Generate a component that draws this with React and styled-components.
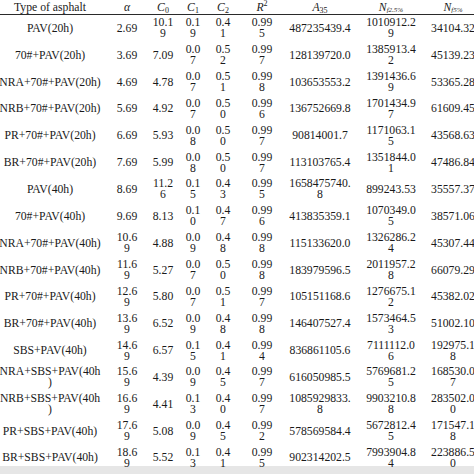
import React from 'react';
import styled, { createGlobalStyle } from 'styled-components';

const GlobalStyle = createGlobalStyle`
  html, body {
    margin: 0;
    padding: 0;
    background: #fff;
  }
`

const Page = styled.div`
  width: 474px;
  height: 474px;
  overflow: hidden;
  background: linear-gradient(to bottom, #fff 466px, #e6e6e6 466px);
  font-family: "Liberation Serif", "Times New Roman", serif;
  font-size: 11.7px;
  color: #1a1a1a;
`

const Table = styled.div`
  display: grid;
  grid-template-columns: 110px 44px 28px 32px 28px 50px 66px 76px 48px;
  grid-template-rows: 15px;
  grid-auto-rows: 26.85px;
  margin-left: -5px;
  width: 482px;
`

const HeadCell = styled.div`
  display: flex;
  align-items: center;
  justify-content: center;
  white-space: nowrap;
  border-bottom: 1px solid #2a2a2a;
  line-height: 11px;
`

const Cell = styled.div`
  display: flex;
  align-items: center;
  justify-content: center;
  text-align: center;
  white-space: pre;
  line-height: 11px;
`

const Sym = styled.i`
  font-style: italic;
`

const Sub = styled.span`
  font-size: ${props => props.small ? '7px' : '8px'};
  font-style: ${props => props.italic ? 'italic' : 'normal'};
  position: relative;
  top: 3px;
`

const Sup = styled.span`
  font-size: 8px;
  position: relative;
  top: -4px;
`

const rows = [
  ['PAV(20h)', '2.69', '10.1\n9', '0.1\n9', '0.4\n1', '0.99\n5', '487235439.4', '1010912.2\n9', '34104.32'],
  ['70#+PAV(20h)', '3.69', '7.09', '0.0\n7', '0.5\n2', '0.99\n7', '128139720.0', '1385913.4\n2', '45139.23'],
  ['NRA+70#+PAV(20h)', '4.69', '4.78', '0.0\n7', '0.5\n1', '0.99\n8', '103653553.2', '1391436.6\n9', '53365.28'],
  ['NRB+70#+PAV(20h)', '5.69', '4.92', '0.0\n7', '0.5\n0', '0.99\n6', '136752669.8', '1701434.9\n7', '61609.45'],
  ['PR+70#+PAV(20h)', '6.69', '5.93', '0.0\n8', '0.5\n0', '0.99\n7', '90814001.7', '1171063.1\n5', '43568.63'],
  ['BR+70#+PAV(20h)', '7.69', '5.99', '0.0\n8', '0.5\n0', '0.99\n7', '113103765.4', '1351844.0\n1', '47486.84'],
  ['PAV(40h)', '8.69', '11.2\n6', '0.1\n5', '0.4\n3', '0.99\n5', '1658475740.\n8', '899243.53', '35557.37'],
  ['70#+PAV(40h)', '9.69', '8.13', '0.1\n0', '0.4\n7', '0.99\n6', '413835359.1', '1070349.0\n5', '38571.06'],
  ['NRA+70#+PAV(40h)', '10.6\n9', '4.88', '0.0\n9', '0.4\n8', '0.99\n8', '115133620.0', '1326286.2\n4', '45307.44'],
  ['NRB+70#+PAV(40h)', '11.6\n9', '5.27', '0.0\n7', '0.5\n0', '0.99\n8', '183979596.5', '2011957.2\n8', '66079.29'],
  ['PR+70#+PAV(40h)', '12.6\n9', '5.80', '0.0\n7', '0.5\n1', '0.99\n7', '105151168.6', '1276675.1\n2', '45382.02'],
  ['BR+70#+PAV(40h)', '13.6\n9', '6.52', '0.0\n9', '0.4\n8', '0.99\n8', '146407527.4', '1573464.5\n3', '51002.10'],
  ['SBS+PAV(40h)', '14.6\n9', '6.57', '0.1\n5', '0.4\n1', '0.99\n4', '836861105.6', '7111112.0\n6', '192975.1\n8'],
  ['NRA+SBS+PAV(40h\n)', '15.6\n9', '4.39', '0.0\n9', '0.4\n5', '0.99\n7', '616050985.5', '5769681.2\n5', '168530.0\n7'],
  ['NRB+SBS+PAV(40h\n)', '16.6\n9', '4.41', '0.1\n3', '0.4\n0', '0.99\n7', '1085929833.\n8', '9903210.8\n8', '283502.0\n0'],
  ['PR+SBS+PAV(40h)', '17.6\n9', '5.08', '0.0\n9', '0.4\n5', '0.99\n2', '578569584.4', '5672812.4\n5', '171547.1\n8'],
  ['BR+SBS+PAV(40h)', '18.6\n9', '5.52', '0.1\n3', '0.4\n1', '0.99\n5', '902314202.5', '7993904.8\n4', '223886.5\n0'],
]

export default function App() {
  return (
    <Page>
      <GlobalStyle />
      <Table>
        <HeadCell>Type of asphalt</HeadCell>
        <HeadCell><Sym>α</Sym></HeadCell>
        <HeadCell><Sym>C</Sym><Sub>0</Sub></HeadCell>
        <HeadCell><Sym>C</Sym><Sub>1</Sub></HeadCell>
        <HeadCell><Sym>C</Sym><Sub>2</Sub></HeadCell>
        <HeadCell><Sym>R</Sym><Sup>2</Sup></HeadCell>
        <HeadCell><Sym>A</Sym><Sub>35</Sub></HeadCell>
        <HeadCell><Sym>N</Sym><Sub small italic>f2.5%</Sub></HeadCell>
        <HeadCell><Sym>N</Sym><Sub small italic>f5%</Sub></HeadCell>
        {rows.map((r, i) => r.map((v, j) => <Cell key={i + '-' + j}>{v}</Cell>))}
      </Table>
    </Page>
  );
}
